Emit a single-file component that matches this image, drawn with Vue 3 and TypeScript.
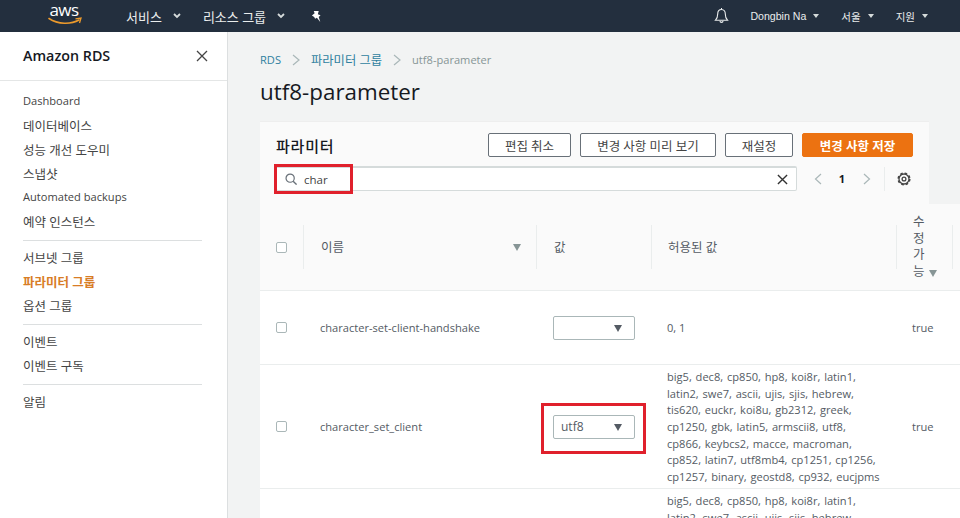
<script setup lang="ts">
const navGroups: { label: string; active?: boolean }[][] = [
  [
    { label: 'Dashboard' },
    { label: '데이터베이스' },
    { label: '성능 개선 도우미' },
    { label: '스냅샷' },
    { label: 'Automated backups' },
    { label: '예약 인스턴스' },
  ],
  [{ label: '서브넷 그룹' }, { label: '파라미터 그룹', active: true }, { label: '옵션 그룹' }],
  [{ label: '이벤트' }, { label: '이벤트 구독' }],
  [{ label: '알림' }],
]
const isKorean = (text: string): boolean => /[가-힣]/.test(text)
const charsets = `big5, dec8, cp850, hp8, koi8r, latin1, latin2, swe7, ascii, ujis, sjis, hebrew, tis620, euckr, koi8u, gb2312, greek, cp1250, gbk, latin5, armscii8, utf8, cp866, keybcs2, macce, macroman, cp852, latin7, utf8mb4, cp1251, cp1256, cp1257, binary, geostd8, cp932, eucjpms`
</script>

<template>
  <div class="page">
    <header class="topbar">
      <div class="logo">
        <span class="logo-text">aws</span>
        <svg class="smile" width="34" height="9" viewBox="0 0 34 9">
          <path d="M1 1.500C10 7.500 23 7.500 31 3" fill="none" stroke="#ec9a2c" stroke-width="1.600" stroke-linecap="round" />
          <path d="M27.500 1.800 L33 1 L31.500 6" fill="none" stroke="#ec9a2c" stroke-width="1.300" />
        </svg>
      </div>
      <span class="top-item services">서비스<svg class="chev" width="8" height="6" viewBox="0 0 8 6"><path d="M1 1l3 3 3-3" fill="none" stroke="#d5dbdb" stroke-width="1.800" /></svg></span>
      <span class="top-item groups">리소스 그룹<svg class="chev" width="8" height="6" viewBox="0 0 8 6"><path d="M1 1l3 3 3-3" fill="none" stroke="#d5dbdb" stroke-width="1.800" /></svg></span>
      <svg class="pin" width="10" height="11" viewBox="0 0 11 12"><path transform="translate(11,0) scale(-1,1)" d="M2.500 0 L8 0 L7 2.500 L10 5 L7.500 6.500 L6.500 8.500 L4.500 7.500 L0.800 12 L2.500 6.500 L0.500 4.500 L3.500 3.500Z" fill="#fff" /></svg>
      <div class="spacer"></div>
      <svg class="bell" width="15" height="16" viewBox="0 0 15 16"><path d="M7.500 1.500c-2.600 0-3.800 2-3.800 4.400 0 3-.6 4.600-2.200 6.300h12c-1.600-1.700-2.200-3.300-2.200-6.300 0-2.400-1.200-4.400-3.800-4.400zM6 13c0 1.800 3 1.800 3 0" fill="none" stroke="#eaeded" stroke-width="1.100" /><path d="M7.500 0v1.500" stroke="#eaeded" /></svg>
      <span class="top-right user">Dongbin Na<i class="caret"></i></span>
      <span class="top-right region">서울<i class="caret"></i></span>
      <span class="top-right support">지원<i class="caret"></i></span>
    </header>

    <div class="body">
      <aside class="sidebar">
        <div class="side-title">
          <span>Amazon RDS</span>
          <svg width="12" height="12" viewBox="0 0 12 12"><path d="M1 1l10 10M11 1L1 11" stroke="#444" stroke-width="1.300" /></svg>
        </div>
        <nav class="nav">
          <template v-for="(group, i) in navGroups" :key="i">
            <hr v-if="i > 0" class="nav-sep" />
            <a v-for="item in group" :key="item.label" class="nav-item" :class="{ active: item.active, ko: isKorean(item.label) }">{{ item.label }}</a>
          </template>
        </nav>
      </aside>

      <main class="main">
        <div class="crumbs">
          <a>RDS</a>
          <svg width="8" height="12" viewBox="0 0 8 12"><path d="M1 1l6 5-6 5" fill="none" stroke="#aab7b8" stroke-width="1.200" /></svg>
          <a class="crumb-ko">파라미터 그룹</a>
          <svg width="8" height="12" viewBox="0 0 8 12"><path d="M1 1l6 5-6 5" fill="none" stroke="#aab7b8" stroke-width="1.200" /></svg>
          <span>utf8-parameter</span>
        </div>
        <h1 class="title">utf8-parameter</h1>

        <section class="panel">
          <div class="panel-head">
            <div class="row-one">
              <h2>파라미터</h2>
              <div class="actions">
                <button class="btn b1">편집 취소</button>
                <button class="btn b2">변경 사항 미리 보기</button>
                <button class="btn b3">재설정</button>
                <button class="btn primary">변경 사항 저장</button>
              </div>
            </div>
            <div class="row-two">
              <div class="search">
                <svg width="12" height="12" viewBox="0 0 14 14"><circle cx="6" cy="6" r="4.800" fill="none" stroke="#687078" stroke-width="1.400" /><path d="M9.500 9.500L13.500 13.500" stroke="#687078" stroke-width="1.600" /></svg>
                <span class="query">char</span>
                <svg class="clear" width="11" height="11" viewBox="0 0 12 12"><path d="M1 1l10 10M11 1L1 11" stroke="#333" stroke-width="1.500" /></svg>
                <div class="mark mark-search"></div>
              </div>
              <div class="pager">
                <svg width="8" height="12" viewBox="0 0 8 12"><path d="M7 1L1.500 6 7 11" fill="none" stroke="#aab7b8" stroke-width="1.200" /></svg>
                <b>1</b>
                <svg width="8" height="12" viewBox="0 0 8 12"><path d="M1 1l5.500 5L1 11" fill="none" stroke="#aab7b8" stroke-width="1.200" /></svg>
              </div>
              <div class="gear-cell">
                <svg width="14" height="14" viewBox="0 0 14 14">
                  <circle cx="7" cy="7" r="5" fill="none" stroke="#444" stroke-width="1.300" />
                  <circle cx="7" cy="7" r="5.800" fill="none" stroke="#444" stroke-width="1.500" stroke-dasharray="2.550 2.000" />
                  <circle cx="7" cy="7" r="1.900" fill="none" stroke="#444" stroke-width="1.300" />
                </svg>
              </div>
            </div>
          </div>

          <div class="t-row t-head">
            <div class="c c-check"><i class="check"></i></div>
            <div class="c c-name"><span class="th-box ko">이름<i class="tri"></i></span></div>
            <div class="c c-val"><span class="th-box ko">값</span></div>
            <div class="c c-allowed"><span class="th-box ko allowed-th">허용된 값</span></div>
            <div class="c c-edit"><span class="th-box ko edit-th"><span class="stacked">수<br />정<br />가<br />능<i class="tri inline"></i></span></span></div>
            <div class="c c-rest"></div>
          </div>

          <div class="t-row r1">
            <div class="c c-check"><i class="check"></i></div>
            <div class="c c-name">character-set-client-handshake</div>
            <div class="c c-val"><div class="select"><span></span><i class="tri dark"></i></div></div>
            <div class="c c-allowed">0, 1</div>
            <div class="c c-edit">true</div>
            <div class="c c-rest"></div>
          </div>

          <div class="t-row r2">
            <div class="c c-check"><i class="check"></i></div>
            <div class="c c-name">character_set_client</div>
            <div class="c c-val">
              <div class="select"><span>utf8</span><i class="tri dark"></i><div class="mark mark-select"></div></div>
            </div>
            <div class="c c-allowed allowed-text">{{ charsets }}</div>
            <div class="c c-edit">true</div>
            <div class="c c-rest"></div>
          </div>

          <div class="t-row r3">
            <div class="c c-check"></div>
            <div class="c c-name"></div>
            <div class="c c-val"></div>
            <div class="c c-allowed allowed-text">{{ charsets }}</div>
            <div class="c c-edit"></div>
            <div class="c c-rest"></div>
          </div>
        </section>
      </main>
    </div>
  </div>
</template>

<style>
html, body { margin: 0; background: #f2f3f3; overflow: hidden; }
</style>

<style scoped>
.page {
  width: 960px;
  height: 518px;
  overflow: hidden;
  font-family: "Open Sans", "Noto Sans CJK KR", sans-serif;
  font-size: 11.100px;
  color: #545b64;
  display: flex;
  flex-direction: column;
}
.ko { font-size: 12.500px; }
.topbar {
  height: 32px;
  flex: none;
  background: #232f3e;
  color: #eaeded;
  display: flex;
  align-items: center;
  font-size: 13px;
}
.logo { margin-left: 47px; width: 36px; height: 32px; position: relative; }
.logo-text {
  display: block;
  font: 500 17px/20px "Open Sans", sans-serif;
  color: #fff;
  letter-spacing: -0.500px;
  text-align: center;
  margin-left: -2px;
}
.smile { position: absolute; left: 1px; top: 17px; }
.top-item { display: flex; align-items: center; }
.services { margin-left: 43px; }
.groups { margin-left: 22px; }
.chev { margin-left: 11px; }
.pin { margin-left: 26px; }
.spacer { flex: 1; }
.bell { margin-right: 21px; }
.top-right { display: flex; align-items: center; font-size: 10.500px; }
.user { font-family: "Liberation Sans", sans-serif; font-size: 10.600px; margin-right: 22px; }
.region { margin-right: 22px; }
.support { margin-right: 32px; }
.caret {
  width: 0;
  height: 0;
  margin-left: 7px;
  border: 3px solid transparent;
  border-top: 4px solid #d5dbdb;
  border-bottom: 0;
}
.body { display: flex; flex: 1; min-height: 0; }
.sidebar {
  width: 227px;
  flex: none;
  background: #fff;
  border-right: 1px solid #dcdfe0;
}
.side-title {
  height: 48px;
  padding: 0 19px 2px 23px;
  box-sizing: content-box;
  height: 46px;
  border-bottom: 1px solid #e4e6e6;
  display: flex;
  align-items: center;
  justify-content: space-between;
  font-size: 14.300px;
  font-weight: 600;
  color: #16191f;
}
.side-title svg { margin-top: 2px; }
.nav { padding: 9px 25px 0 23px; display: flex; flex-direction: column; }
.nav-item { line-height: 22px; height: 24px; color: #444; }
.nav-item.ko { line-height: 25px; }
.nav-item.active { color: #d87d26; font-weight: 700; }
.nav-sep { width: 179px; margin: 6px 0 5px; border: 0; border-top: 1px solid #dcdfe0; height: 0; }
.main { flex: 1; min-width: 0; padding-left: 32px; }
.crumbs {
  margin-top: 20px;
  height: 15px;
  display: flex;
  align-items: center;
  gap: 11px;
  color: #879596;
}
.crumbs a { color: #2f7f9f; }
.crumbs .crumb-ko { font-size: 12.300px; }
.title {
  margin: 10px 0 0;
  font-size: 22.400px;
  line-height: 30px;
  font-weight: 400;
  color: #16191f;
}
.panel { margin-top: 15px; width: 700px; }
.panel-head {
  width: 669px;
  height: 82px;
  background: #fafafa;
  box-sizing: border-box;
  padding: 11px 16px 0;
  box-shadow: 0 -1px 0 #eee;
}
.row-one { display: flex; align-items: center; justify-content: space-between; height: 24px; }
.row-one h2 { margin: 0; font-size: 15px; font-weight: 500; color: #16191f; letter-spacing: 0.800px; }
.actions { display: flex; gap: 9px; }
.btn {
  height: 24px;
  box-sizing: border-box;
  border: 1px solid #687078;
  border-radius: 2px;
  background: #fff;
  font: 400 12.500px "Open Sans", "Noto Sans CJK KR", sans-serif;
  color: #444;
  padding: 0;
}
.b1 { width: 83px; }
.b2 { width: 136px; }
.b3 { width: 68px; }
.primary { width: 111px; background: #ec7211; border-color: #ec7211; color: #fff; font-weight: 700; }
.row-two { display: flex; align-items: center; margin-top: 9px; }
.search {
  position: relative;
  width: 521px;
  height: 25px;
  box-sizing: border-box;
  background: #fff;
  border: 1px solid #d5dbdb;
  border-top: 2px solid #d5dbdb;
  border-radius: 2px;
  display: flex;
  align-items: center;
  padding: 0 8px;
  margin-right: 17px;
}
.query { margin-left: 7px; color: #444; flex: 1; font-size: 11.500px; }
.mark { position: absolute; border: 3px solid #e0202c; pointer-events: none; box-sizing: border-box; }
.mark-search { left: -3px; top: -4px; width: 79px; height: 30px; }
.pager { display: flex; align-items: center; width: 57px; justify-content: space-between; color: #16191f; }
.pager b { font-size: 11px; margin-right: 1px; }
.gear-cell { margin-left: 13px; height: 24px; padding-left: 12px; border-left: 1px solid #eaeded; display: flex; align-items: center; }
.t-row { display: flex; width: 700px; background: #fff; border-bottom: 1px solid #eaeded; box-sizing: border-box; }
.t-head { background: #fafafa; height: 87px; color: #545b64; }
.r1 { height: 74px; }
.r2 { height: 124px; }
.r3 { height: 60px; align-items: flex-start; }
.c { box-sizing: border-box; display: flex; align-items: center; flex: none; }
.c-check { width: 43px; padding-left: 16px; }
.c-name { width: 233px; padding-left: 17px; }
.c-val { width: 115px; padding-left: 17px; }
.c-allowed { width: 245px; padding-left: 16px; }
.c-edit { width: 57px; padding-left: 16px; }
.t-head .c-name, .t-head .c-val, .t-head .c-allowed, .t-head .c-edit { padding-left: 0; }
.c-rest { flex: 1; }
.th-box {
  position: relative;
  height: 44px;
  width: 100%;
  box-sizing: border-box;
  border-left: 1px solid #eaeded;
  display: flex;
  align-items: center;
  padding-left: 17px;
  padding-bottom: 2px;
}
.allowed-th, .edit-th { padding-left: 16px; }
.edit-th { border-right: 1px solid #eaeded; padding-bottom: 0; }
.stacked { display: block; flex: none; line-height: 16.500px; }
.check {
  width: 9px;
  height: 9px;
  border: 1px solid #aab7b8;
  border-radius: 2px;
  background: #fff;
  display: block;
}
.tri {
  width: 0;
  height: 0;
  border: 4.500px solid transparent;
  border-top: 7px solid #879596;
  border-bottom: 0;
  position: absolute;
  right: 15px;
  top: 19px;
}
.tri.inline { position: static; display: inline-block; margin-left: 4px; vertical-align: -1px; border-width: 4px; border-top-width: 7px; border-bottom: 0; }
.tri.dark { border-top-color: #545b64; right: 12px; top: 8px; border-width: 4px; border-top-width: 7px; border-bottom: 0; }
.select {
  position: relative;
  width: 82px;
  height: 24px;
  box-sizing: border-box;
  border: 1px solid #aab7b8;
  border-radius: 2px;
  background: #fff;
  padding-left: 7px;
  line-height: 22px;
  font-size: 12px;
}
.mark-select { left: -13px; top: -13px; width: 105px; height: 51px; }
.allowed-text { line-height: 16.670px; align-items: flex-start; padding-right: 16px; padding-top: 4px; word-spacing: 0.900px; }
</style>
